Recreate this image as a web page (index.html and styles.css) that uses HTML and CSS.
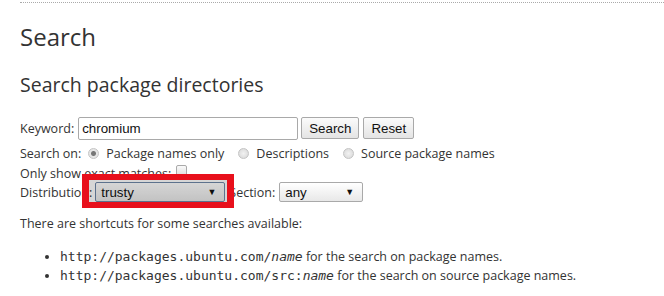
FILE: index.html
```html
<!DOCTYPE html>
<html lang="en">
<head>
    <meta charset="UTF-8">
    <title>Search</title>
    <link rel="stylesheet" href="styles.css">
</head>
<body>
    <div class="page">
        <h1>Search</h1>
        <h2>Search package directories</h2>

        <form class="search-form">
            <div class="row row-kw">
                <label for="kw">Keyword:</label>
                <input type="text" id="kw" class="kw" value="chromium">
                <button type="button" class="btn">Search</button>
                <button type="reset" class="btn btn-reset">Reset</button>
            </div>
            <div class="row row-on">
                <span>Search on:</span>
                <input type="radio" name="searchon" id="on-names" class="radio" checked>
                <label for="on-names">Package names only</label>
                <input type="radio" name="searchon" id="on-desc" class="radio">
                <label for="on-desc">Descriptions</label>
                <input type="radio" name="searchon" id="on-src" class="radio">
                <label for="on-src">Source package names</label>
            </div>
            <div class="row row-exact">
                <label for="exact">Only show exact matches:</label>
                <input type="checkbox" id="exact" class="check">
            </div>
            <div class="row row-dist">
                <label for="suite">Distribution:</label>
                <div class="select select-dist" id="suite">
                    <span>trusty</span><span class="arrow">&#9660;</span>
                    <div class="highlight"></div>
                </div>
                <label for="section">Section:</label>
                <div class="select select-section" id="section">
                    <span>any</span><span class="arrow">&#9660;</span>
                </div>
            </div>
        </form>

        <p class="shortcuts">There are shortcuts for some searches available:</p>
        <ul class="links">
            <li><code>http://packages.ubuntu.com/<var>name</var></code> for the search on package names.</li>
            <li><code>http://packages.ubuntu.com/src:<var>name</var></code> for the search on source package names.</li>
        </ul>
    </div>
</body>
</html>
```

FILE: styles.css
```css
body {
    margin: 0;
    padding: 0;
    background-color: white;
    color: #333;
    font-family: 'Open Sans', 'Noto Sans', sans-serif;
    font-size: 12.5px;
}
.page {
    margin: 2px 0 0 20px;
    border-top: 1px dotted #aaa;
}
h1 {
    font-size: 24px;
    font-weight: normal;
    margin: 18px 0 0 0;
    line-height: 32px;
}
h2 {
    font-size: 19.5px;
    font-weight: normal;
    margin: 18px 0 0 0;
    line-height: 28px;
}
.search-form {
    margin-top: 17px;
}
.row {
    display: flex;
    align-items: center;
}
.row-kw {
    height: 24px;
}
.row-on {
    height: 26px;
}
.row-exact {
    height: 14px;
}
.row-dist {
    height: 24px;
}
.kw {
    width: 220px;
    height: 23px;
    box-sizing: border-box;
    margin: 0 3px 0 4px;
    padding: 0 3px;
    border: 1px solid #a9a9a9;
    border-radius: 2px;
    font-family: 'Liberation Sans', Arial, sans-serif;
    font-size: 13.33px;
    color: #111;
}
.btn {
    height: 22px;
    padding: 0 7px;
    margin: 0;
    border: 1px solid #a9a9a9;
    border-radius: 2px;
    background: linear-gradient(#fbfbfb, #e4e4e4);
    font-family: 'Liberation Sans', Arial, sans-serif;
    font-size: 13.33px;
    color: #111;
}
.btn-reset {
    margin-left: 4px;
}
.radio {
    appearance: none;
    width: 11px;
    height: 11px;
    margin: 0 7px 0 7px;
    border-radius: 50%;
    border: 1px solid #c4c4c4;
    background: radial-gradient(#f2f2f2, #d6d6d6);
    box-sizing: border-box;
}
.radio:checked {
    background: radial-gradient(circle, #777 0 2px, #e6e6e6 3px);
}
.radio + label {
    margin-right: 7px;
}
.check {
    appearance: none;
    width: 11px;
    height: 11px;
    margin: 0 0 6px 5px;
    border: 1px solid #aaa;
    border-radius: 2px;
    background: linear-gradient(#fafafa, #e0e0e0);
    box-sizing: border-box;
}
.select {
    position: relative;
    display: flex;
    align-items: center;
    justify-content: space-between;
    box-sizing: border-box;
    height: 20px;
    padding: 0 8px 0 5px;
    border: 1px solid #a9a9a9;
    border-radius: 2px;
    background: linear-gradient(#ffffff, #e8e8e8);
    font-family: 'Liberation Sans', Arial, sans-serif;
    font-size: 13.33px;
    color: #111;
}
.select-dist {
    width: 130px;
    margin: 0 4px 0 3px;
    border-color: #6f88a8;
}
.select-section {
    width: 84px;
    margin-left: 4px;
}
.arrow {
    font-size: 9px;
}
.highlight {
    position: absolute;
    left: -14px;
    top: -9px;
    width: 152px;
    height: 34px;
    box-sizing: border-box;
    border: 7px solid #e8101c;
    border-top-width: 6px;
    border-bottom-width: 6px;
    background-color: rgba(0, 0, 0, 0.16);
}
.shortcuts {
    margin: 10px 0 0 0;
    line-height: 20px;
}
.links {
    margin: 13px 0 0 0;
    padding-left: 40px;
    line-height: 19px;
}
code {
    font-family: 'DejaVu Sans Mono', monospace;
    font-size: 13px;
}
var {
    font-style: italic;
}
```
